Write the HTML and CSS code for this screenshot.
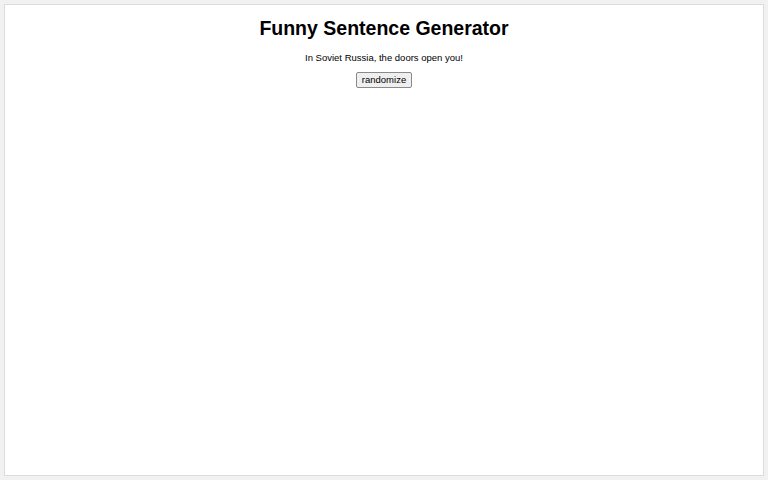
FILE: index.html
```html
<!DOCTYPE html>
<html>
<head>
<meta charset="utf-8">
<link rel="stylesheet" href="styles.css">
</head>
<body>
<div class="card">
  <h1 class="title">Funny Sentence Generator</h1>
  <p class="sentence">In Soviet Russia, the doors open you!</p>
  <button class="btn">randomize</button>
</div>
</body>
</html>
```
FILE: styles.css
```css
html, body {
  margin: 0;
  height: 100%;
}
body {
  background: #f1f1f1;
  padding: 4px 4px 4px 4px;
  box-sizing: border-box;
  font-family: "Liberation Sans", Arial, sans-serif;
}
.card {
  background: #fff;
  border: 1px solid #dcdcdc;
  height: 100%;
  box-sizing: border-box;
  display: flex;
  flex-direction: column;
  align-items: center;
  padding-top: 12px;
}
.title {
  font-size: 19.5px;
  font-weight: bold;
  margin: 0;
  line-height: 23px;
  color: #000;
}
.sentence {
  font-size: 9.5px;
  margin: 12px 0 8px;
  line-height: 12px;
  color: #000;
}
.btn {
  font-family: "Liberation Sans", Arial, sans-serif;
  font-size: 9.5px;
  padding: 1px 5px 2px;
  margin: 0;
  border: 1px solid #8a8a8a;
  border-radius: 2px;
  background: #efefef;
  color: #000;
}
```
